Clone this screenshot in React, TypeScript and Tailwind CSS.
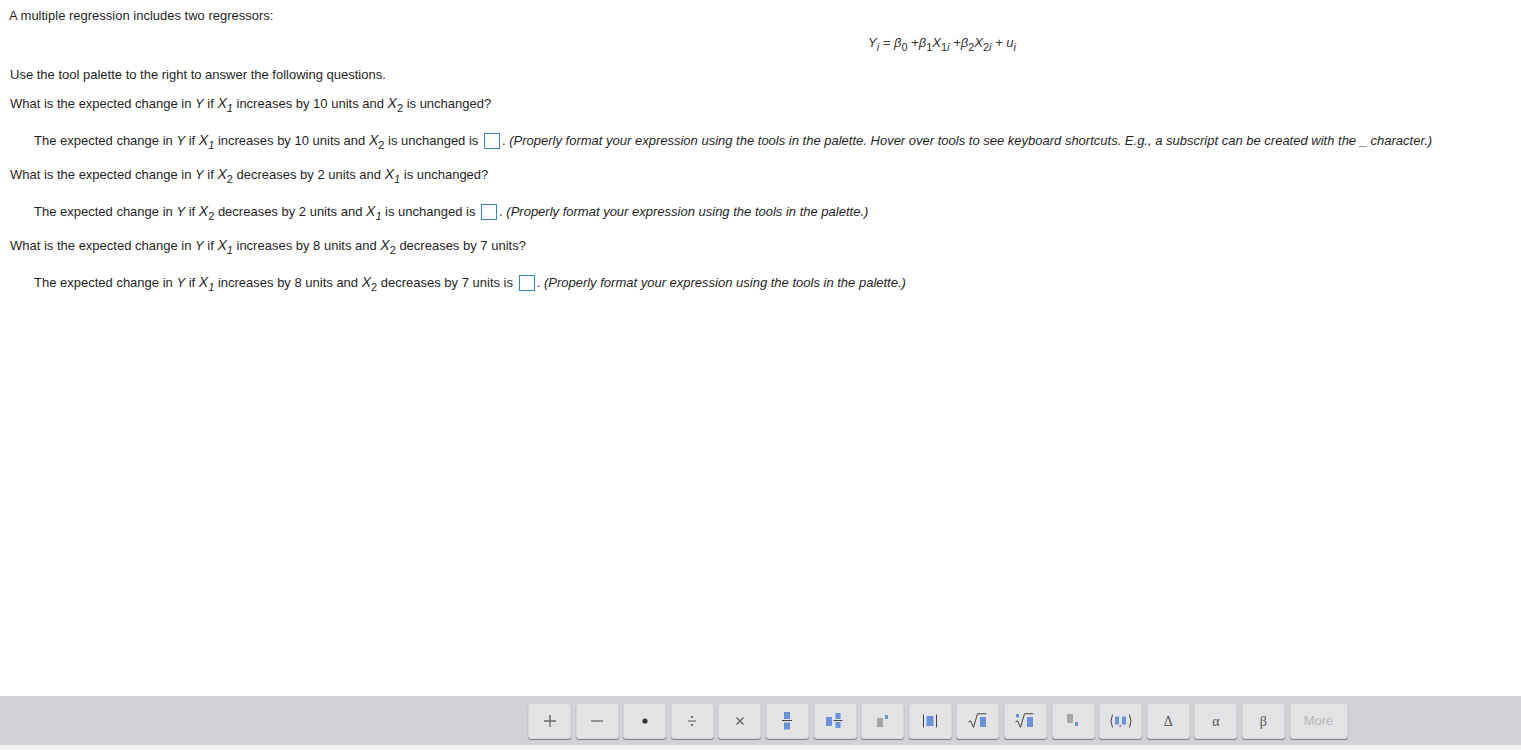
import React from 'react';

const BLUE = '#6b91d8';
const GRAY = '#a7a7a7';

function Box() {
  return (
    <span className="inline-block w-[16px] h-[16px] border border-[#3a84b0] bg-white align-[-4px] mx-[2px]" />
  );
}

function Sub({ children, italic }: { children: React.ReactNode; italic?: boolean }) {
  return (
    <sub className={`text-[11px] leading-none relative top-[4px] ${italic ? 'italic' : 'not-italic'}`}>{children}</sub>
  );
}

function X({ n }: { n: string }) {
  return (
    <span>
      <i className="text-[14px] leading-none">X</i>
      <Sub italic={n === '1'}>{n}</Sub>
    </span>
  );
}

const Y = () => <i>Y</i>;

const icons: React.ReactNode[] = [
  // plus
  <svg width="14" height="14" viewBox="0 0 14 14"><path d="M7 1v12M1 7h12" stroke="#666" strokeWidth="1.3" /></svg>,
  // minus
  <svg width="14" height="14" viewBox="0 0 14 14"><path d="M1 7h12" stroke="#666" strokeWidth="1.3" /></svg>,
  // dot
  <svg width="8" height="8" viewBox="0 0 8 8"><circle cx="4" cy="4" r="2.6" fill="#333" /></svg>,
  // divide
  <svg width="12" height="12" viewBox="0 0 12 12"><circle cx="6" cy="2" r="1.1" fill="#555" /><path d="M2 6h8" stroke="#555" strokeWidth="1" /><circle cx="6" cy="10" r="1.1" fill="#555" /></svg>,
  // times
  <svg width="10" height="10" viewBox="0 0 10 10"><path d="M1.5 1.5l7 7M8.5 1.5l-7 7" stroke="#555" strokeWidth="1.1" /></svg>,
  // fraction
  <svg width="12" height="18" viewBox="0 0 12 18"><rect x="3" y="0" width="6" height="7" fill={BLUE} /><path d="M1 8.5h10" stroke="#444" strokeWidth="1" /><rect x="3" y="10.5" width="6" height="7" fill={BLUE} /></svg>,
  // mixed
  <svg width="18" height="16" viewBox="0 0 18 16"><rect x="0" y="4" width="6" height="9" fill={BLUE} /><rect x="9.5" y="0" width="5" height="6" fill={BLUE} /><path d="M7.5 7.5h9" stroke="#444" strokeWidth="1" /><rect x="9.5" y="9" width="5" height="6" fill={BLUE} /></svg>,
  // superscript
  <svg width="14" height="14" viewBox="0 0 14 14"><rect x="1" y="4" width="6" height="9" fill={GRAY} /><rect x="9" y="1" width="3" height="4" fill={BLUE} /></svg>,
  // abs
  <svg width="16" height="14" viewBox="0 0 16 14"><path d="M1.5 0.5v13M14.5 0.5v13" stroke="#444" strokeWidth="1" /><rect x="4.5" y="2" width="7" height="10" fill={BLUE} /></svg>,
  // sqrt
  <svg width="20" height="16" viewBox="0 0 20 16"><path d="M0.5 9l2-1.2 3 6.5 4-13.5h9" stroke="#444" strokeWidth="1" fill="none" /><rect x="12" y="4" width="6" height="10" fill={BLUE} /></svg>,
  // nth root
  <svg width="20" height="16" viewBox="0 0 20 16"><rect x="1" y="1" width="3" height="3.5" fill={BLUE} /><path d="M0.5 9l2-1.2 3 6.5 4-13.5h9" stroke="#444" strokeWidth="1" fill="none" /><rect x="12" y="4" width="6" height="10" fill={BLUE} /></svg>,
  // subscript
  <svg width="14" height="14" viewBox="0 0 14 14"><rect x="1" y="0" width="6" height="9" fill={GRAY} /><rect x="9" y="8" width="3" height="4" fill={BLUE} /></svg>,
  // interval
  <svg width="24" height="14" viewBox="0 0 24 14"><path d="M3.5 0.5q-3 6.5 0 13M20.5 0.5q3 6.5 0 13" stroke="#444" strokeWidth="1" fill="none" /><rect x="6" y="2.5" width="4" height="8" fill={BLUE} /><path d="M11.5 11l-0.8 2" stroke="#444" strokeWidth="1" /><rect x="13" y="2.5" width="4" height="8" fill={BLUE} /></svg>,
];

const textButtons = ['Δ', 'α', 'β'];

function PaletteButton({ children, wide }: { children: React.ReactNode; wide?: boolean }) {
  return (
    <div
      className={`${wide ? 'w-[58px]' : 'w-[43px]'} h-[36px] flex items-center justify-center rounded-[3px] bg-[#e3e3e5] border border-[#d6d6d9] shadow-[0_1px_1px_rgba(0,0,0,0.4)]`}
    >
      {children}
    </div>
  );
}

export default function App() {
  return (
    <div className="min-h-screen flex flex-col bg-white text-[13px] text-[#1f1f1f] font-['Liberation_Sans',Arial,sans-serif]">
      <div className="flex-1 pt-[8px] pl-[9px]">
        <p className="h-[16px] leading-[16px]">A multiple regression includes two regressors:</p>

        <p className="mt-[9px] h-[20px] leading-[20px] pl-[859px] italic text-[13px] text-[#333]">
          Y<Sub italic>i</Sub> = β<Sub>0</Sub> +β<Sub>1</Sub>X<Sub>1<i>i</i></Sub> +β<Sub>2</Sub>X<Sub>2<i>i</i></Sub> + u<Sub italic>i</Sub>
        </p>

        <p className="mt-[14px] h-[16px] leading-[16px] pl-[1px]">Use the tool palette to the right to answer the following questions.</p>

        <p className="mt-[11px] h-[20px] leading-[20px] pl-[1px]">
          What is the expected change in <Y /> if <X n="1" /> increases by 10 units and <X n="2" /> is unchanged?
        </p>
        <p className="mt-[17px] h-[20px] leading-[20px] pl-[25px]">
          The expected change in <Y /> if <X n="1" /> increases by 10 units and <X n="2" /> is unchanged is <Box />.{' '}
          <i>
            (Properly format your expression using the tools in the palette. Hover over tools to see keyboard shortcuts. E.g., a subscript can be
            created with the _ character.)
          </i>
        </p>

        <p className="mt-[14px] h-[20px] leading-[20px] pl-[1px]">
          What is the expected change in <Y /> if <X n="2" /> decreases by 2 units and <X n="1" /> is unchanged?
        </p>
        <p className="mt-[17px] h-[20px] leading-[20px] pl-[25px]">
          The expected change in <Y /> if <X n="2" /> decreases by 2 units and <X n="1" /> is unchanged is <Box />.{' '}
          <i>(Properly format your expression using the tools in the palette.)</i>
        </p>

        <p className="mt-[14px] h-[20px] leading-[20px] pl-[1px]">
          What is the expected change in <Y /> if <X n="1" /> increases by 8 units and <X n="2" /> decreases by 7 units?
        </p>
        <p className="mt-[17px] h-[20px] leading-[20px] pl-[25px]">
          The expected change in <Y /> if <X n="1" /> increases by 8 units and <X n="2" /> decreases by 7 units is <Box />.{' '}
          <i>(Properly format your expression using the tools in the palette.)</i>
        </p>
      </div>

      <div className="h-[49px] bg-[#d1d2d6] flex items-start pt-[7px] pl-[528px] gap-[4.6px]">
        {icons.map((icon, i) => (
          <PaletteButton key={i}>{icon}</PaletteButton>
        ))}
        {textButtons.map((t) => (
          <PaletteButton key={t}>
            <span className="text-[14px] text-[#555] font-['Liberation_Serif',serif]">{t}</span>
          </PaletteButton>
        ))}
        <PaletteButton wide>
          <span className="text-[13px] text-[#b9b9bb]">More</span>
        </PaletteButton>
      </div>
      <div className="h-[5px] bg-[#f2f2f2]" />
    </div>
  );
}
